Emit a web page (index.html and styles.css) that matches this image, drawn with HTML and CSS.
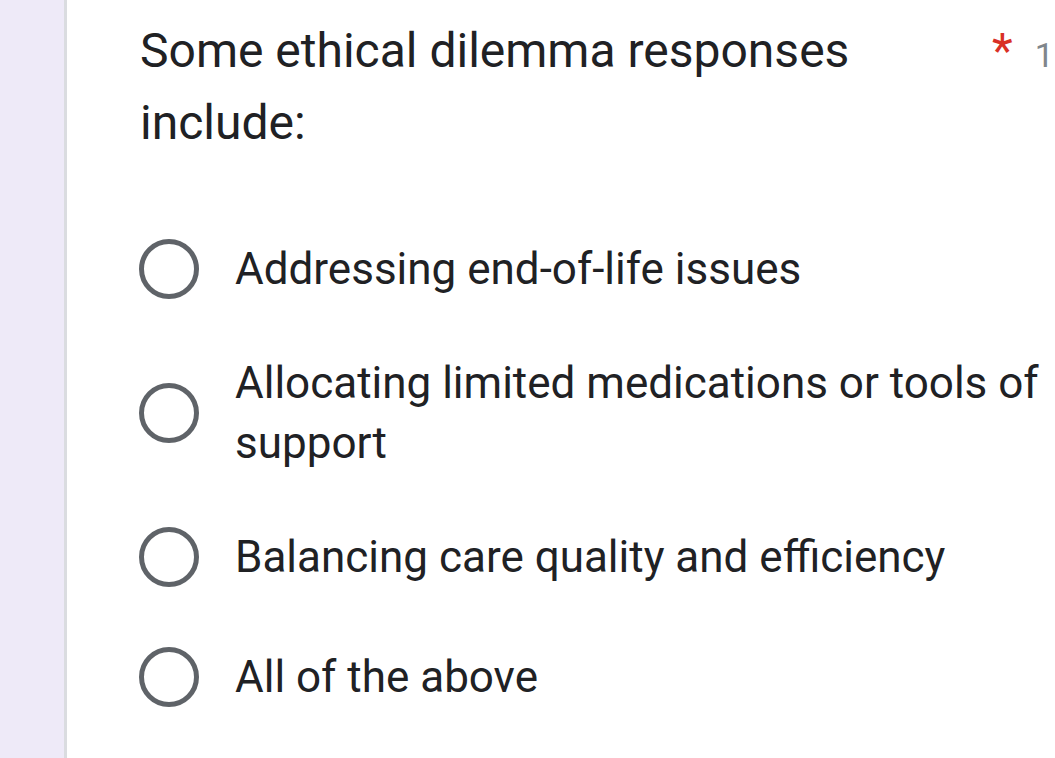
FILE: index.html
```html
<!DOCTYPE html>
<html lang="en">
<head>
<meta charset="utf-8">
<title>Question</title>
<link rel="stylesheet" href="styles.css">
</head>
<body>
<div class="page">
  <div class="side"></div>
  <main class="card">
    <div class="head">
      <div class="title">Some ethical dilemma responses include:</div>
      <div class="req"><span class="star">*</span><span class="pts">1 point</span></div>
    </div>
    <div class="options">
      <label class="opt">
        <span class="radio"><svg width="60" height="60" viewBox="0 0 60 60"><circle cx="30" cy="30" r="27.5" fill="none" stroke="#5f6368" stroke-width="5"/></svg></span>
        <span class="txt">Addressing end-of-life issues</span>
      </label>
      <label class="opt">
        <span class="radio"><svg width="60" height="60" viewBox="0 0 60 60"><circle cx="30" cy="30" r="27.5" fill="none" stroke="#5f6368" stroke-width="5"/></svg></span>
        <span class="txt">Allocating limited medications or tools of support</span>
      </label>
      <label class="opt">
        <span class="radio"><svg width="60" height="60" viewBox="0 0 60 60"><circle cx="30" cy="30" r="27.5" fill="none" stroke="#5f6368" stroke-width="5"/></svg></span>
        <span class="txt">Balancing care quality and efficiency</span>
      </label>
      <label class="opt">
        <span class="radio"><svg width="60" height="60" viewBox="0 0 60 60"><circle cx="30" cy="30" r="27.5" fill="none" stroke="#5f6368" stroke-width="5"/></svg></span>
        <span class="txt">All of the above</span>
      </label>
    </div>
  </main>
</div>
</body>
</html>
```

FILE: styles.css
```css
html, body {
  margin: 0;
  padding: 0;
  background: #ffffff;
  overflow: hidden;
}
body {
  font-family: Roboto, "Noto Sans", Arial, sans-serif;
  color: #202124;
}
.page {
  display: flex;
  width: 1055px;
  height: 758px;
}
.side {
  flex: 0 0 64px;
  background: #eeeaf8;
}
.card {
  flex: 1 1 auto;
  border-left: 3px solid #dadce0;
  padding: 15px 0 0 72px;
  min-width: 0;
}
.head {
  display: flex;
  align-items: flex-start;
}
.title {
  flex: 0 0 830px;
  font-size: 48px;
  line-height: 72px;
  margin-left: 1px;
}
.req {
  display: flex;
  align-items: baseline;
  white-space: nowrap;
  margin-left: 22px;
  line-height: 72px;
}
.star {
  color: #d93025;
  font-size: 48px;
}
.pts {
  color: #80868b;
  font-size: 34px;
  margin-left: 22px;
}
.options {
  display: flex;
  flex-direction: column;
  gap: 48px;
  margin-top: 74px;
}
.opt {
  display: flex;
  align-items: center;
}
.radio {
  flex: 0 0 60px;
  height: 72px;
  display: flex;
  align-items: center;
  justify-content: center;
}
.radio svg {
  display: block;
}
.txt {
  margin-left: 36px;
  font-size: 44px;
  line-height: 60px;
  padding-right: 4px;
}
```
